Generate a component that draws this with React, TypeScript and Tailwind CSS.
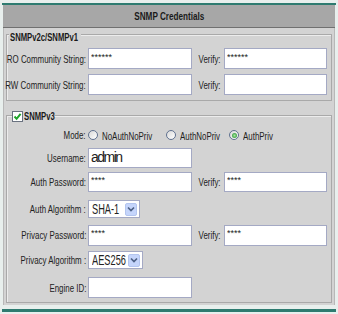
import React from 'react';

// squeezed screenshot: all text is narrowed horizontally
function Label({ text, w = 'w-[81px]', pr = 'pr-[2px]' }: { text: string; w?: string; pr?: string }) {
  return (
    <div className={`${w} ${pr} shrink-0 flex justify-end text-[11px] leading-[12px] text-[#222]`}>
      <span className="shrink-0 inline-block origin-right scale-x-[0.72] whitespace-nowrap">{text}</span>
    </div>
  );
}

function Input({ value = '', w = 'w-[104px]', h = 'h-[20px]', big }: { value?: string; w?: string; h?: string; big?: boolean }) {
  return (
    <input
      readOnly
      value={value}
      className={`${w} ${h} shrink-0 bg-white border border-[#a4a9c4] px-[2px] outline-none text-[#222] ${big ? 'text-[14px] tracking-[-1.5px]' : 'text-[9px] leading-[9px] pb-[4px]'}`}
    />
  );
}

function Select({ value, w }: { value: string; w: string }) {
  return (
    <div className={`${w} h-[18px] shrink-0 bg-white border border-[#a4a9c4] flex items-center pl-[3px] pr-[2px]`}>
      <div className="flex-1 min-w-0">
        <span className="inline-block origin-left scale-x-[0.66] text-[14px] leading-[16px] text-[#222] whitespace-nowrap">{value}</span>
      </div>
      <span className="w-[12px] h-[13px] rounded-[2px] bg-[#c5d5fb] border border-[#b3c5ef] flex items-center justify-center shrink-0">
        <svg width="8" height="6" viewBox="0 0 8 6">
          <path d="M1 1.5 L4 4.5 L7 1.5" stroke="#4d6185" strokeWidth="1.7" fill="none" />
        </svg>
      </span>
    </div>
  );
}

function Radio({ label, checked, w }: { label: string; checked?: boolean; w: string }) {
  return (
    <div className={`${w} shrink-0 flex items-center`}>
      <span className="w-[10px] h-[10px] rounded-full border border-[#5f7190] bg-[linear-gradient(135deg,#d8d8d8,#ffffff)] flex items-center justify-center shrink-0">
        {checked && <span className="w-[5px] h-[5px] rounded-full bg-[radial-gradient(circle,#a8e6a0_0%,#2f9a3a_80%)]" />}
      </span>
      <span className="ml-[4px] mt-[2px] text-[11px] leading-[12px] text-[#222] inline-block origin-left scale-x-[0.72] whitespace-nowrap">
        {label}
      </span>
    </div>
  );
}

function Row({ h, children }: { h: string; children: React.ReactNode }) {
  return <div className={`${h} flex items-center`}>{children}</div>;
}

export default function App() {
  return (
    <div className="w-[338px] h-[314px] bg-[#e8efed] font-['Liberation_Sans',Arial,sans-serif] pt-[3px] flex flex-col">
      <div className="mx-[2px] h-[2px] bg-[#2e7b70]" />
      <div className="mx-[3px] h-[23px] bg-[#a7a7a7] border-b border-[#707070] flex items-center justify-center">
        <span className="inline-block scale-x-[0.74] text-[11px] font-bold text-[#1a1a1a] whitespace-nowrap">SNMP Credentials</span>
      </div>

      <div className="mx-[3px] h-[277px] bg-[#d3d3d3] border-x border-[#b8b8b8] px-[2px] pt-[6px]">
        {/* SNMPv2c / v1 */}
        <div className="relative h-[67px] border border-[#a9a9a9] shadow-[inset_1px_1px_0_#ececec] pt-[13px] flex flex-col gap-[5px]">
          <div className="absolute left-[2px] top-[-4px] w-[72px] px-[1px] bg-[#d3d3d3] text-[11px] leading-[12px] font-bold text-[#1a1a1a]">
            <span className="inline-block origin-left scale-x-[0.7] whitespace-nowrap">SNMPv2c/SNMPv1</span>
          </div>
          <Row h="h-[21px]">
            <Label text="RO Community String:" />
            <Input value="******" h="h-[21px]" />
            <Label text="Verify:" w="w-[32px]" pr="pr-[3px]" />
            <Input value="******" w="w-[103px]" h="h-[21px]" />
          </Row>
          <Row h="h-[21px]">
            <Label text="RW Community String:" />
            <Input h="h-[21px]" />
            <Label text="Verify:" w="w-[32px]" pr="pr-[3px]" />
            <Input w="w-[103px]" h="h-[21px]" />
          </Row>
        </div>

        {/* SNMPv3 */}
        <div className="relative mt-[14px] h-[188px] border border-[#a9a9a9] shadow-[inset_1px_1px_0_#ececec] pt-[8px] flex flex-col">
          <div className="absolute left-[5px] top-[-6px] w-[40px] bg-[#d3d3d3] flex items-center">
            <span className="w-[11px] h-[11px] bg-white border border-[#6a7280] flex items-center justify-center shrink-0">
              <svg width="9" height="9" viewBox="0 0 9 9">
                <path d="M1.5 4.5 L3.6 6.8 L7.6 1.8" stroke="#1fa52a" strokeWidth="2" fill="none" />
              </svg>
            </span>
            <span className="ml-[1px] inline-block origin-left scale-x-[0.7] text-[11px] leading-[12px] font-bold text-[#1a1a1a] whitespace-nowrap">SNMPv3</span>
          </div>

          <Row h="h-[22px]">
            <Label text="Mode:" />
            <Radio label="NoAuthNoPriv" w="w-[78px]" />
            <Radio label="AuthNoPriv" w="w-[63px]" />
            <Radio label="AuthPriv" checked w="w-[60px]" />
          </Row>
          <Row h="h-[23px]">
            <Label text="Username:" />
            <Input value="admin" big />
          </Row>
          <Row h="h-[26px]">
            <Label text="Auth Password:" />
            <Input value="****" />
            <Label text="Verify:" w="w-[32px]" pr="pr-[3px]" />
            <Input value="****" w="w-[103px]" />
          </Row>
          <Row h="h-[28px]">
            <Label text="Auth Algorithm :" />
            <Select value="SHA-1" w="w-[52px]" />
          </Row>
          <Row h="h-[24px]">
            <Label text="Privacy Password:" />
            <Input value="****" h="h-[21px]" />
            <Label text="Verify:" w="w-[32px]" pr="pr-[3px]" />
            <Input value="****" w="w-[103px]" h="h-[21px]" />
          </Row>
          <Row h="h-[26px]">
            <Label text="Privacy Algorithm :" />
            <Select value="AES256" w="w-[55px]" />
          </Row>
          <Row h="h-[29px]">
            <Label text="Engine ID:" />
            <Input h="h-[21px]" />
          </Row>
        </div>
      </div>

      <div className="h-[4px]" />
      <div className="mx-[2px] h-[3px] bg-[#2e7b70]" />
    </div>
  );
}
